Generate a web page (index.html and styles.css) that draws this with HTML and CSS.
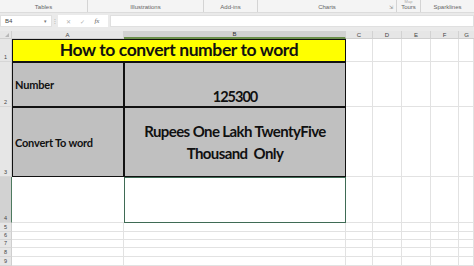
FILE: index.html
```html
<!DOCTYPE html>
<html>
<head>
<meta charset="utf-8">
<link rel="stylesheet" href="styles.css">
</head>
<body>
<div class="ribbon">
  <div class="grp g-tables"><span class="lbl">Tables</span></div>
  <div class="grp g-illu"><span class="lbl">Illustrations</span></div>
  <div class="grp g-add"><span class="lbl">Add-ins</span></div>
  <div class="grp g-charts"><span class="lbl">Charts</span><span class="launch">⇲</span></div>
  <div class="grp g-tours"><span class="marks">Map</span><span class="lbl">Tours</span></div>
  <div class="grp g-spark"><span class="lbl">Sparklines</span></div>
</div>
<div class="fbar">
  <div class="namebox"><span>B4</span><span class="dd">▾</span></div>
  <div class="dots">⁝</div>
  <div class="ficons"><span>✕</span><span>✓</span><span class="fx">fx</span></div>
  <div class="finput"></div>
</div>
<div class="sheet">
  <div class="corner"><span class="tri"></span></div>
  <div class="ch">A</div>
  <div class="ch sel">B</div>
  <div class="ch">C</div>
  <div class="ch">D</div>
  <div class="ch">E</div>
  <div class="ch">F</div>
  <div class="ch last">G</div>

  <div class="rh">1</div>
  <div class="title">How to convert number to word</div>
  <div class="c"></div><div class="c"></div><div class="c"></div><div class="c"></div><div class="c"></div>

  <div class="rh">2</div>
  <div class="t label">Number</div>
  <div class="t value">125300</div>
  <div class="c"></div><div class="c"></div><div class="c"></div><div class="c"></div><div class="c"></div>

  <div class="rh">3</div>
  <div class="t label">Convert To word</div>
  <div class="t words">Rupees One Lakh TwentyFive<br>Thousand&nbsp; Only</div>
  <div class="c"></div><div class="c"></div><div class="c"></div><div class="c"></div><div class="c"></div>

  <div class="rh rsel">4</div>
  <div class="a4"></div>
  <div class="b4"></div>
  <div class="c"></div><div class="c"></div><div class="c"></div><div class="c"></div><div class="c"></div>

  <div class="rh">5</div>
  <div class="c"></div><div class="c"></div><div class="c"></div><div class="c"></div><div class="c"></div><div class="c"></div><div class="c"></div>
  <div class="rh">6</div>
  <div class="c"></div><div class="c"></div><div class="c"></div><div class="c"></div><div class="c"></div><div class="c"></div><div class="c"></div>
  <div class="rh">7</div>
  <div class="c"></div><div class="c"></div><div class="c"></div><div class="c"></div><div class="c"></div><div class="c"></div><div class="c"></div>
  <div class="rh">8</div>
  <div class="c"></div><div class="c"></div><div class="c"></div><div class="c"></div><div class="c"></div><div class="c"></div><div class="c"></div>
  <div class="rh">9</div>
  <div class="c"></div><div class="c"></div><div class="c"></div><div class="c"></div><div class="c"></div><div class="c"></div><div class="c"></div>
</div>
</body>
</html>
```
FILE: styles.css
```css
* { box-sizing: border-box; }
html, body { margin: 0; padding: 0; }
body {
  width: 474px;
  height: 266px;
  overflow: hidden;
  background: #eaeaea;
  font-family: "Liberation Sans", Arial, sans-serif;
}

.ribbon {
  display: flex;
  height: 13px;
  background: #f4f4f4;
  border-bottom: 1px solid #dcdcdc;
}
.grp {
  position: relative;
  display: flex;
  align-items: flex-end;
  justify-content: center;
  border-right: 1px solid #d4d4d4;
  padding-bottom: 2px;
}
.lbl { font-size: 6px; color: #666; line-height: 6px; }
.marks {
  position: absolute;
  top: 0;
  left: 0; right: 0;
  text-align: center;
  font-size: 4px;
  line-height: 4px;
  color: #aaa;
}
.launch { position: absolute; right: 3px; bottom: 2px; font-size: 5px; color: #888; }
.g-tables { width: 88px; }
.g-illu { width: 116px; }
.g-add { width: 54px; }
.g-charts { width: 139px; }
.g-tours { width: 24px; }
.g-spark { flex: 1; border-right: none; }

.fbar {
  display: flex;
  height: 12px;
  margin-top: 2px;
  align-items: stretch;
}
.namebox {
  width: 52px;
  background: #fff;
  border: 1px solid #e0e0e0;
  display: flex;
  align-items: center;
  justify-content: space-between;
  padding: 0 4px 0 4px;
  font-size: 6px;
  color: #444;
}
.dd { font-size: 5px; color: #777; }
.dots {
  width: 6px;
  font-size: 7px;
  color: #aaa;
  display: flex;
  align-items: center;
  justify-content: center;
}
.ficons {
  width: 50px;
  background: #fff;
  display: flex;
  align-items: center;
  justify-content: space-around;
  padding: 0 4px;
  font-size: 6px;
  color: #b0b0b0;
}
.ficons .fx { font-style: italic; font-family: "Liberation Serif", serif; color: #666; font-size: 7px; }
.finput {
  flex: 1;
  margin-left: 2px;
  background: #fff;
  border: 1px solid #e0e0e0;
}

.sheet {
  margin-top: 4px;
  display: grid;
  grid-template-columns: 12px 112px 222px 27px 29px 29px 28px 1fr;
  grid-template-rows: 8px 23px 45px 70px 46px 9px 8px 8px 9px 9px;
  background: #fff;
}
.corner {
  background: #e6e6e6;
  border-right: 1px solid #d0d0d0;
  border-bottom: 1px solid #d0d0d0;
  position: relative;
}
.tri {
  position: absolute;
  right: 2px; bottom: 1px;
  width: 0; height: 0;
  border-left: 4px solid transparent;
  border-bottom: 4px solid #b8b8b8;
}
.ch {
  background: #e6e6e6;
  border-right: 1px solid #d2d2d2;
  border-bottom: 1px solid #cfcfcf;
  font-size: 6px;
  color: #444;
  display: flex;
  align-items: center;
  justify-content: center;
  line-height: 6px;
}
.ch.sel { background: #d2d2d2; border-bottom: 2px solid #6b8f4a; color: #333; }
.ch.last { border-right: none; }
.rh {
  background: #e6e6e6;
  border-right: 1px solid #cfcfcf;
  border-bottom: 1px solid #d6d6d6;
  font-size: 5.5px;
  color: #444;
  display: flex;
  align-items: flex-end;
  justify-content: center;
  line-height: 6px;
  padding-bottom: 1px;
}
.rh.rsel { background: #d2d2d2; border-right: 1px solid #4e7a5f; }
.c {
  border-right: 1px solid #e2e2e2;
  border-bottom: 1px solid #e2e2e2;
}
.title {
  grid-column: span 2;
  background: #ffff00;
  border: 1px solid #111;
  display: flex;
  align-items: flex-end;
  justify-content: center;
  padding-bottom: 1px;
  font-family: Lato, "Liberation Sans", sans-serif;
  font-weight: 700;
  font-size: 17.5px;
  letter-spacing: -0.4px;
  line-height: 20px;
  color: #111;
}
.t {
  background: #c0c0c0;
  border: 1px solid #111;
  font-family: Lato, "Liberation Sans", sans-serif;
  font-weight: 700;
  color: #111;
  display: flex;
}
.label {
  align-items: center;
  padding-left: 2px;
  font-size: 11px;
  letter-spacing: -0.2px;
}
.value {
  align-items: flex-end;
  justify-content: center;
  font-size: 14.5px;
  letter-spacing: -1px;
  line-height: 18px;
}
.words {
  align-items: center;
  justify-content: center;
  text-align: center;
  font-size: 15px;
  letter-spacing: -0.6px;
  line-height: 22px;
}
.a4 {
  border-bottom: 1px solid #e2e2e2;
}
.b4 {
  border: 1px solid #3f6b55;
}
```
